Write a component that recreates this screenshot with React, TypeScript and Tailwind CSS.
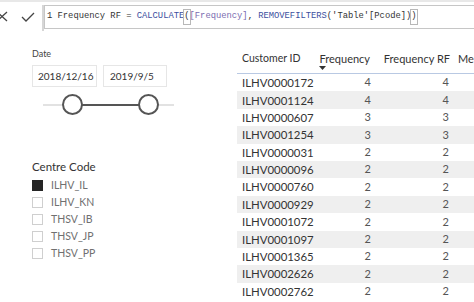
import React from "react";

const rows: [string, number, number][] = [
  ["ILHV0000172", 4, 4],
  ["ILHV0001124", 4, 4],
  ["ILHV0000607", 3, 3],
  ["ILHV0001254", 3, 3],
  ["ILHV0000031", 2, 2],
  ["ILHV0000096", 2, 2],
  ["ILHV0000760", 2, 2],
  ["ILHV0000929", 2, 2],
  ["ILHV0001072", 2, 2],
  ["ILHV0001097", 2, 2],
  ["ILHV0001365", 2, 2],
  ["ILHV0002626", 2, 2],
  ["ILHV0002762", 2, 2],
];

const codes = ["ILHV_IL", "ILHV_KN", "THSV_IB", "THSV_JP", "THSV_PP"];

function FormulaBar() {
  return (
    <div className="relative h-[30px] border-t-[2px] border-[#e8e8e8] flex items-start">
      <div className="w-[46px] h-full flex items-center gap-[13px] -ml-[4px] pt-[1px]">
        <svg width="12" height="11" viewBox="0 0 12 11" className="shrink-0">
          <path d="M1 1 L11 10 M11 1 L1 10" stroke="#444" strokeWidth="1.3" fill="none" />
        </svg>
        <svg width="14" height="10" viewBox="0 0 14 10" className="shrink-0">
          <path d="M1 5 L5 9 L13 1" stroke="#444" strokeWidth="1.3" fill="none" />
        </svg>
      </div>
      <div className="w-[2px] h-[26px] mt-[3px] bg-[#d6d6d6]" />
      <div className="flex-1 h-[24px] mt-[3px] border border-[#c6c6c6] border-r-0 flex items-center pl-[2px] font-['Liberation_Mono',monospace] text-[8.8px] text-[#333] whitespace-pre">
        <span>1 Frequency RF = </span>
        <span className="text-[#3c4f9e]">CALCULATE</span>
        <span className="outline outline-1 outline-[#b8b8b8]">(</span>
        <span className="text-[#7a6cb0]">[Frequency]</span>
        <span>, </span>
        <span className="text-[#3c4f9e]">REMOVEFILTERS</span>
        <span>('Table'[Pcode])</span>
        <span className="outline outline-1 outline-[#b8b8b8]">)</span>
      </div>
    </div>
  );
}

function DateSlicer() {
  return (
    <div className="pl-[32px] pt-[18px]">
      <div className="text-[9px] leading-[12px] text-[#444]">Date</div>
      <div className="flex gap-[6px] mt-[5px]">
        <div className="w-[65px] h-[22px] border border-[#e6e6e6] flex items-center pl-[5px] text-[10px] text-[#333]">
          2018/12/16
        </div>
        <div className="w-[64px] h-[22px] border border-[#e6e6e6] flex items-center pl-[6px] text-[10px] text-[#333]">
          2019/9/5
        </div>
      </div>
      <div className="relative h-[33px] w-[150px] mt-[1px]">
        <div className="absolute left-[11px] right-[8px] top-[16px] h-[2px] bg-[#e2e2e2]" />
        <div className="absolute left-[40px] w-[76px] top-[16px] h-[2px] bg-[#555]" />
        <div className="absolute left-[30px] top-[6px] w-[21px] h-[21px] rounded-full border-[2px] border-[#555] bg-white" />
        <div className="absolute left-[106px] top-[6px] w-[21px] h-[21px] rounded-full border-[2px] border-[#555] bg-white" />
      </div>
    </div>
  );
}

function CodeSlicer() {
  return (
    <div className="pl-[32px] mt-[39px]">
      <div className="text-[11.5px] leading-[14px] text-[#333]">Centre Code</div>
      <div className="mt-[3px]">
        {codes.map((c, i) => (
          <div key={c} className="h-[17px] flex items-center gap-[8px]">
            <div
              className={
                i === 0
                  ? "w-[11px] h-[11px] bg-[#252525]"
                  : "w-[11px] h-[11px] border border-[#cfcfcf] bg-white"
              }
            />
            <span className="text-[10.5px] text-[#707070]">{c}</span>
          </div>
        ))}
      </div>
    </div>
  );
}

function Table() {
  return (
    <div className="pt-[21px] text-[11px] text-[#333]">
      <div className="relative h-[23px] pb-[6px] flex items-center border-b border-[#b9c9e3]">
        <div className="w-[73px] pl-[5px] whitespace-nowrap text-[10.5px]">Customer ID</div>
        <div className="relative w-[62px] text-right pr-[2px] whitespace-nowrap">
          Frequency
          <svg width="7" height="4" viewBox="0 0 7 4" className="absolute left-[9px] top-[15px]">
            <path d="M0 0 L7 0 L3.5 4 Z" fill="#333" />
          </svg>
        </div>
        <div className="w-[80px] text-right pr-[2px] whitespace-nowrap">Frequency RF</div>
        <div className="pl-[6px] whitespace-nowrap">Me</div>
      </div>
      {rows.map(([id, f, rf], i) => (
        <div
          key={id}
          className={`h-[17.4px] flex items-center ${i % 2 === 1 ? "bg-[#efefef]" : "bg-white"}`}
        >
          <div className="w-[73px] pl-[5px] whitespace-nowrap text-[11.4px]">{id}</div>
          <div className="w-[62px] text-right pr-[1px] text-[#555]">{f}</div>
          <div className="w-[80px] text-right pr-[3px] text-[#555]">{rf}</div>
        </div>
      ))}
    </div>
  );
}

export default function App() {
  return (
    <div className="w-[474px] h-[302px] overflow-hidden bg-white font-['Lato','Liberation_Sans',sans-serif]">
      <FormulaBar />
      <div className="flex">
        <div className="w-[237px] shrink-0">
          <DateSlicer />
          <CodeSlicer />
        </div>
        <div className="flex-1">
          <Table />
        </div>
      </div>
    </div>
  );
}
